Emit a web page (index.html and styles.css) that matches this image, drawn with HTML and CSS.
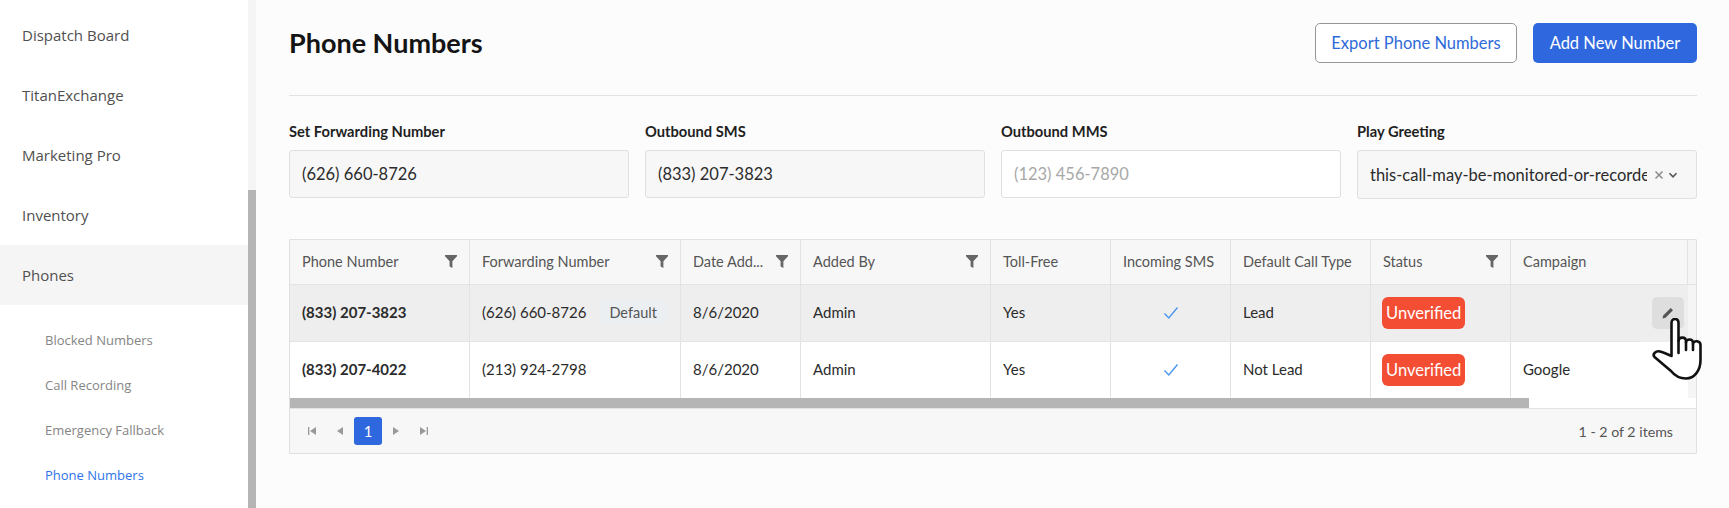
FILE: index.html
```html
<!DOCTYPE html>
<html lang="en">
<head>
<meta charset="utf-8">
<title>Phone Numbers</title>
<link rel="stylesheet" href="styles.css">
</head>
<body>
<div class="app">
  <aside class="sidebar">
    <nav class="nav">
      <a class="nav-item">Dispatch Board</a>
      <a class="nav-item">TitanExchange</a>
      <a class="nav-item">Marketing Pro</a>
      <a class="nav-item">Inventory</a>
      <a class="nav-item nav-open">Phones</a>
      <div class="subnav">
        <a class="sub-item">Blocked Numbers</a>
        <a class="sub-item">Call Recording</a>
        <a class="sub-item">Emergency Fallback</a>
        <a class="sub-item sub-active">Phone Numbers</a>
      </div>
    </nav>
    <div class="side-scroll"><div class="side-thumb"></div></div>
  </aside>
  <main class="main">
    <header class="top">
      <h1 class="title">Phone Numbers</h1>
      <div class="actions">
        <button class="btn btn-outline">Export Phone Numbers</button>
        <button class="btn btn-primary">Add New Number</button>
      </div>
    </header>
    <section class="fields">
      <div class="field"><div class="label">Set Forwarding Number</div><div class="input disabled">(626) 660-8726</div></div>
      <div class="field"><div class="label">Outbound SMS</div><div class="input disabled">(833) 207-3823</div></div>
      <div class="field"><div class="label">Outbound MMS</div><div class="input placeholder">(123) 456-7890</div></div>
      <div class="field"><div class="label">Play Greeting</div>
        <div class="input disabled select">
          <span class="select-value">this-call-may-be-monitored-or-recorded</span>
          <svg class="select-x" viewBox="0 0 10 10"><path d="M1.5 1.5l7 7M8.5 1.5l-7 7"/></svg>
          <svg class="select-caret" viewBox="0 0 10 10"><path d="M1.5 3.2L5 6.8l3.5-3.6"/></svg>
        </div>
      </div>
    </section>
    <section class="grid">
      <div class="row head">
        <div class="cell">Phone Number<svg class="funnel" viewBox="0 0 12 13"><path d="M0 0h12v1.2L7.4 6.2V13L4.6 11.6V6.2L0 1.2z"/></svg></div>
        <div class="cell">Forwarding Number<svg class="funnel" viewBox="0 0 12 13"><path d="M0 0h12v1.2L7.4 6.2V13L4.6 11.6V6.2L0 1.2z"/></svg></div>
        <div class="cell">Date Add...<svg class="funnel" viewBox="0 0 12 13"><path d="M0 0h12v1.2L7.4 6.2V13L4.6 11.6V6.2L0 1.2z"/></svg></div>
        <div class="cell">Added By<svg class="funnel" viewBox="0 0 12 13"><path d="M0 0h12v1.2L7.4 6.2V13L4.6 11.6V6.2L0 1.2z"/></svg></div>
        <div class="cell">Toll-Free</div>
        <div class="cell">Incoming SMS</div>
        <div class="cell">Default Call Type</div>
        <div class="cell">Status<svg class="funnel" viewBox="0 0 12 13"><path d="M0 0h12v1.2L7.4 6.2V13L4.6 11.6V6.2L0 1.2z"/></svg></div>
        <div class="cell">Campaign</div>
        <div class="gutter"></div>
      </div>
      <div class="row body selected">
        <div class="cell strong">(833) 207-3823</div>
        <div class="cell">(626) 660-8726<span class="tag">Default</span></div>
        <div class="cell">8/6/2020</div>
        <div class="cell">Admin</div>
        <div class="cell">Yes</div>
        <div class="cell center"><svg class="check" viewBox="0 0 16 14"><path d="M1.5 7.5l4.3 4.5L14.5 1.5"/></svg></div>
        <div class="cell">Lead</div>
        <div class="cell"><span class="badge">Unverified</span></div>
        <div class="cell cell-end">
          <span class="edit"><svg viewBox="0 0 14 14"><path d="M1.5 12.5l.7-3L9.7 2l2.3 2.3-7.5 7.5z"/></svg></span>
        </div>
        <div class="gutter"></div>
      </div>
      <div class="row body">
        <div class="cell strong">(833) 207-4022</div>
        <div class="cell">(213) 924-2798</div>
        <div class="cell">8/6/2020</div>
        <div class="cell">Admin</div>
        <div class="cell">Yes</div>
        <div class="cell center"><svg class="check" viewBox="0 0 16 14"><path d="M1.5 7.5l4.3 4.5L14.5 1.5"/></svg></div>
        <div class="cell">Not Lead</div>
        <div class="cell"><span class="badge">Unverified</span></div>
        <div class="cell">Google</div>
        <div class="gutter"></div>
      </div>
      <div class="hscroll"><div class="hthumb"></div></div>
      <div class="pager">
        <div class="pages">
          <span class="pg"><svg viewBox="0 0 10 10"><path d="M1 1h1.3v8H1zM9 1v8L3 5z"/></svg></span>
          <span class="pg"><svg viewBox="0 0 10 10"><path d="M8 1v8L2 5z"/></svg></span>
          <span class="pg pg-on">1</span>
          <span class="pg"><svg viewBox="0 0 10 10"><path d="M2 1v8l6-4z"/></svg></span>
          <span class="pg"><svg viewBox="0 0 10 10"><path d="M1 1v8l6-4zM7.7 1H9v8H7.7z"/></svg></span>
        </div>
        <div class="count">1 - 2 of 2 items</div>
      </div>
    </section>
  </main>
</div>
<svg class="hand" viewBox="0 0 50 62"><path d="M19.5 38V5C19.5-.3 26.5-.3 26.5 5V23C26.5 18.5 34 18.5 34 23V24.5C34 20.5 41 20.5 41 25V26C41 22 48.5 22.5 48.5 27V42C48.5 53 42 60.5 34 60.5C27 60.5 23 58 19 53L2.5 39C0 36 4 32.5 8 33.5C12 34.5 16 36.5 19.5 38Z"/><path class="hand-line" d="M26.5 23V35M34 24V32M41 26V32"/></svg>
</body>
</html>
```
FILE: styles.css
```css
* { box-sizing: border-box; }
html, body { margin: 0; height: 100%; }
body { position: relative; width: 1729px; height: 508px; overflow: hidden; background: #fcfcfc; font-family: "Lato", "Noto Sans", sans-serif; color: #2b2b2b; }
.app { display: flex; height: 508px; }

.sidebar { width: 256px; flex: none; display: flex; background: #fff; }
.nav { width: 248px; flex: none; display: flex; flex-direction: column; padding-top: 5px; }
.nav-item { height: 60px; display: flex; align-items: center; padding-left: 22px; font-family: "Open Sans", sans-serif; font-size: 15px; color: #505050; }
.nav-open { background: #f5f5f5; }
.subnav { display: flex; flex-direction: column; padding-top: 12px; }
.sub-item { height: 45px; display: flex; align-items: center; padding-left: 45px; font-family: "Open Sans", sans-serif; font-size: 13px; color: #858585; }
.sub-active { color: #2f74ea; }
.side-scroll { width: 8px; background: #f5f5f5; padding-top: 190px; }
.side-thumb { height: 318px; background: #b5b5b5; }

.main { flex: 1; min-width: 0; padding: 23px 32px 0 33px; }
.top { height: 73px; display: flex; justify-content: space-between; align-items: flex-start; border-bottom: 1px solid #e2e2e2; }
.title { margin: 0; font-size: 27px; line-height: 40px; font-weight: 700; color: #141414; }
.actions { display: flex; gap: 16px; }
.btn { height: 40px; border-radius: 5px; font: 400 16.5px "Lato", sans-serif; padding: 0; }
.btn-outline { width: 202px; background: #fff; border: 1px solid #969696; color: #2f6ad9; }
.btn-primary { width: 164px; background: #2f67de; border: 0; color: #fff; }

.fields { display: grid; grid-template-columns: repeat(4, minmax(0, 1fr)); gap: 16px; padding-top: 25px; }
.label { font-size: 14.7px; line-height: 20px; font-weight: 700; color: #1f1f1f; margin-bottom: 9px; }
.input { height: 48px; display: flex; align-items: center; padding: 0 12px; background: #fff; border: 1px solid #e0e0e0; border-radius: 3px; font-size: 16.5px; }
.disabled { background: #f7f7f7; color: #2b2b2b; }
.placeholder { color: #a8a8a8; }
.select { height: 49px; padding-right: 18px; }
.select-value { flex: 1; min-width: 0; white-space: nowrap; overflow: hidden; }
.select-x { width: 10px; height: 10px; margin-left: 7px; fill: none; stroke: #8c8c8c; stroke-width: 1.5; flex: none; }
.select-caret { width: 10px; height: 10px; margin-left: 4px; fill: none; stroke: #555; stroke-width: 1.5; flex: none; }

.grid { margin-top: 40px; border: 1px solid #e0e0e0; border-radius: 1px; }
.row { display: grid; grid-template-columns: 180px 211px 120px 190px 120px 120px 140px 140px 177px 8px; }
.cell { display: flex; align-items: center; padding: 0 12px 2px; border-right: 1px solid #e3e3e3; font-size: 15px; min-width: 0; position: relative; white-space: nowrap; }
.head { height: 45px; background: #f7f7f7; border-bottom: 1px solid #e3e3e3; }
.head .cell { color: #555; justify-content: space-between; font-size: 14.5px; }
.body { height: 57px; background: #fff; }
.body + .body { height: 56px; }
.selected { background: #eee; border-bottom: 1px solid #e3e3e3; }
.body .cell { color: #2b2b2b; }
.body .cell-end { border-right: 0; justify-content: flex-end; padding-right: 4px; }
.cell-end::after { content: ""; position: absolute; right: 0; bottom: -1px; width: 48px; height: 1px; background: #eee; }
.body .cell:nth-last-child(2) { border-right: 0; }
.strong { font-weight: 700; }
.center { justify-content: center; }
.gutter { background: #f5f5f5; }
.tag { margin-left: 14px; height: 23px; display: flex; align-items: center; padding: 0 9px; border-radius: 3px; background: #ebeff2; color: #555; font-size: 14.5px; }
.badge { height: 32px; margin: 2px 0 0 -1px; display: inline-flex; align-items: center; padding: 0 4px; border-radius: 6px; background: #f34e33; color: #fff; font-size: 16.5px; }
.check { width: 16px; height: 14px; margin-top: 2px; fill: none; stroke: #4a96f0; stroke-width: 1.4; }
.funnel { width: 12px; height: 13px; fill: #666; flex: none; }
.edit { width: 32px; height: 32px; margin-top: 2px; display: flex; align-items: center; justify-content: center; background: #dedede; border-radius: 5px; }
.edit svg { width: 14px; height: 14px; fill: #555; }

.hscroll { height: 10px; background: #fff; }
.hthumb { height: 10px; width: 1239px; background: #b5b5b5; }
.pager { height: 45px; display: flex; align-items: center; justify-content: space-between; padding: 0 23px 0 8px; background: #f7f7f7; border-top: 1px solid #e3e3e3; }
.pages { display: flex; }
.pg { width: 28px; height: 28px; display: flex; align-items: center; justify-content: center; font-size: 15px; border-radius: 3px; }
.pg svg { width: 10px; height: 10px; fill: #999; }
.pg-on { background: #2f67de; color: #fff; }
.count { font-size: 14.2px; color: #555; }

.hand { position: absolute; left: 1652px; top: 318px; width: 50px; height: 62px; fill: #fff; stroke: #111; stroke-width: 2.6; stroke-linejoin: round; stroke-linecap: round; }
.hand-line { fill: none; }
```
